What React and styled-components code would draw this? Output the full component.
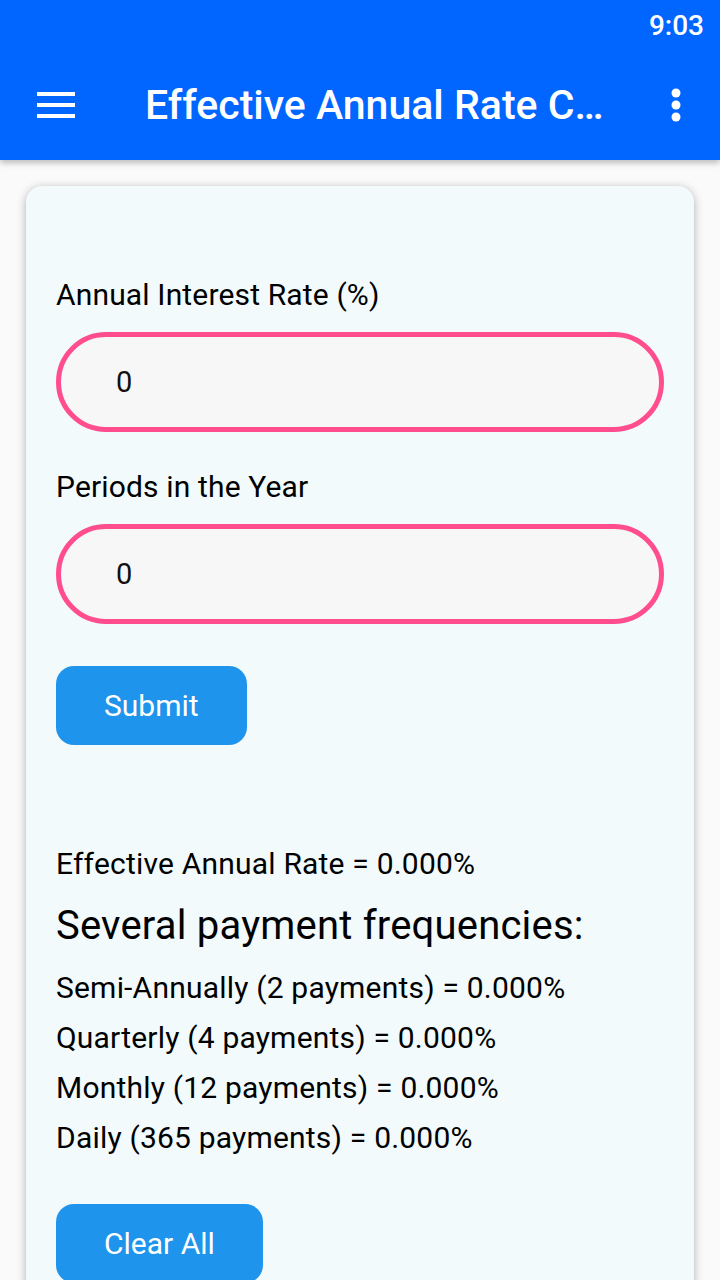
import React from "react";
import styled, { createGlobalStyle } from "styled-components";

const GlobalStyle = createGlobalStyle`
  * { box-sizing: border-box; }
  html, body {
    margin: 0;
    padding: 0;
    background: #fafafa;
    font-family: Roboto, "Noto Sans", sans-serif;
  }
`;

const Screen = styled.div`
  width: 720px;
  height: 1280px;
  overflow: hidden;
  background: #fafafa;
`;

const Header = styled.header`
  background: #0066ff;
  color: #fff;
  box-shadow: 0 3px 6px rgba(0, 0, 0, 0.25);
  position: relative;
  z-index: 1;
`;

const StatusBar = styled.div`
  height: 50px;
  display: flex;
  justify-content: flex-end;
  align-items: center;
  padding-right: 16px;
  font-size: 28px;
  font-weight: 500;
`;

const Toolbar = styled.div`
  height: 110px;
  display: flex;
  align-items: center;
  padding: 0 38px 0 37px;
`;

const Title = styled.h1`
  margin: 0 0 0 70px;
  font-size: 41px;
  font-weight: 500;
  white-space: nowrap;
  overflow: hidden;
  text-overflow: ellipsis;
  width: 468px;
  line-height: 52px;
`;

const IconBox = styled.div`
  display: flex;
  align-items: center;
  justify-content: center;
  margin-left: ${(p) => (p.$end ? "auto" : "0")};
`;

const Content = styled.main`
  padding: 26px 26px 0;
`;

const Card = styled.section`
  background: #f2fafb;
  border-radius: 16px;
  box-shadow: 0 2px 10px rgba(0, 0, 0, 0.3);
  padding: 92px 30px 40px;
  min-height: 1200px;
`;

const Label = styled.div`
  font-size: 30px;
  line-height: 34px;
  letter-spacing: 0.15px;
  color: #000;
  margin-bottom: 20px;
`;

const Field = styled.div`
  height: 100px;
  border: 5px solid #ff4d8d;
  border-radius: 50px;
  background: #f7f7f7;
  display: flex;
  align-items: center;
  padding-left: 55px;
  font-size: 29px;
  color: #111;
  margin-bottom: ${(p) => p.$gap || 0}px;
`;

const Button = styled.button`
  border: none;
  background: #1e94ec;
  color: #fff;
  font-family: Roboto, "Noto Sans", sans-serif;
  font-size: 30px;
  height: 79px;
  padding: 0 48px;
  border-radius: 18px;
  display: block;
`;

const Spacer = styled.div`
  height: ${(p) => p.$h}px;
`;

const Result = styled.div`
  font-size: 30px;
  letter-spacing: 0.2px;
  color: #000;
  line-height: 50px;
`;

const SubHeading = styled.h2`
  margin: 0;
  font-size: 40px;
  font-weight: 400;
  letter-spacing: 0.2px;
  color: #000;
  line-height: 74px;
`;

const Hamburger = () => (
  <svg width="38" height="30" viewBox="0 0 38 30">
    <rect x="0" y="2" width="38" height="4" fill="#fff" />
    <rect x="0" y="13" width="38" height="4" fill="#fff" />
    <rect x="0" y="24" width="38" height="4" fill="#fff" />
  </svg>
);

const Dots = () => (
  <svg width="12" height="34" viewBox="0 0 12 34">
    <circle cx="6" cy="5" r="4.5" fill="#fff" />
    <circle cx="6" cy="17" r="4.5" fill="#fff" />
    <circle cx="6" cy="29" r="4.5" fill="#fff" />
  </svg>
);

const rows = [
  "Semi-Annually (2 payments) = 0.000%",
  "Quarterly (4 payments) = 0.000%",
  "Monthly (12 payments) = 0.000%",
  "Daily (365 payments) = 0.000%",
];

export default function App() {
  return (
    <Screen>
      <GlobalStyle />
      <Header>
        <StatusBar>9:03</StatusBar>
        <Toolbar>
          <IconBox><Hamburger /></IconBox>
          <Title>Effective Annual Rate Calculator</Title>
          <IconBox $end><Dots /></IconBox>
        </Toolbar>
      </Header>
      <Content>
        <Card>
          <Label>Annual Interest Rate (%)</Label>
          <Field $gap={38}>0</Field>
          <Label>Periods in the Year</Label>
          <Field $gap={42}>0</Field>
          <Button>Submit</Button>
          <Spacer $h={94} />
          <Result>Effective Annual Rate = 0.000%</Result>
          <SubHeading>Several payment frequencies:</SubHeading>
          {rows.map((r) => (
            <Result key={r}>{r}</Result>
          ))}
          <Spacer $h={41} />
          <Button>Clear All</Button>
        </Card>
      </Content>
    </Screen>
  );
}
